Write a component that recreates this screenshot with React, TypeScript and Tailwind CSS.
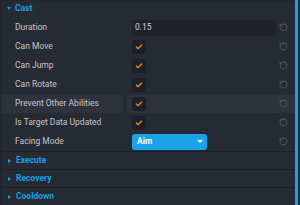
import { RotateCcw, Check } from "lucide-react";

type Row = {
  label: string;
  kind: "input" | "check" | "select";
  value?: string;
  active?: boolean;
};

const rows: Row[] = [
  { label: "Duration", kind: "input", value: "0.15" },
  { label: "Can Move", kind: "check" },
  { label: "Can Jump", kind: "check" },
  { label: "Can Rotate", kind: "check" },
  { label: "Prevent Other Abilities", kind: "check", active: true },
  { label: "Is Target Data Updated", kind: "check" },
  { label: "Facing Mode", kind: "select", value: "Aim" },
];

const sections = ["Execute", "Recovery", "Cooldown"];

function ResetIcon() {
  return (
    <RotateCcw
      className="h-[9px] w-[9px] text-[#4d525d]"
      strokeWidth={2.8}
    />
  );
}

function PropertyRow({ row }: { row: Row }) {
  const bg = row.active ? "bg-[#2e323c]" : "";
  return (
    <div className="flex h-[19px] items-center">
      <div
        className={`flex h-[18px] w-[121px] items-center whitespace-nowrap pl-[13px] text-[8.5px] text-[#c3c6cc] ${bg}`}
      >
        {row.label}
      </div>
      <div className={`ml-[4px] flex h-[18px] flex-1 items-center pl-[5px] ${bg}`}>
        <div className="flex w-[144px] items-center">
          {row.kind === "input" && (
            <div className="flex h-[16px] w-[144px] items-center rounded-[3px] bg-[#1e2128] pl-[3px] text-[8.5px] text-[#d2d4d8]">
              {row.value}
            </div>
          )}
          {row.kind === "check" && (
            <div className="flex h-[14px] w-[14px] items-center justify-center rounded-[2px] bg-[#1d2027]">
              <Check className="h-[8px] w-[8px] text-[#e08b1f]" strokeWidth={4} />
            </div>
          )}
          {row.kind === "select" && (
            <div className="flex h-[16px] w-[75px] items-center justify-between rounded-[3px] bg-[#1ba3ea] pl-[5px] pr-[4px] text-[8.5px] font-bold text-white">
              <span>{row.value}</span>
              <span className="h-0 w-0 border-x-[3px] border-t-[3px] border-x-transparent border-t-white" />
            </div>
          )}
        </div>
        <div className="ml-auto mr-[7px] flex items-center">
          <ResetIcon />
        </div>
      </div>
    </div>
  );
}

function SectionHeader({ title }: { title: string }) {
  return (
    <div className="flex h-[18px] items-center border-t border-[#1c1f25] pl-[6px]">
      <span className="h-0 w-0 border-y-[2.5px] border-l-[3px] border-y-transparent border-l-[#1a9ee6]" />
      <span className="ml-[5px] text-[8.5px] font-bold text-[#1a9ee6]">{title}</span>
    </div>
  );
}

export default function App() {
  return (
    <div
      className="flex h-[205px] w-[300px] overflow-hidden bg-[#262a33]"
      style={{ fontFamily: "Roboto, 'Liberation Sans', sans-serif" }}
    >
      <div className="flex flex-1 flex-col border-l-2 border-[#23262e]">
        <div className="flex h-[16px] items-center border-t border-[#22252c] pl-[5px]">
          <span className="h-0 w-0 border-x-[2.5px] border-t-[3px] border-x-transparent border-t-[#1a9ee6]" />
          <span className="ml-[4px] text-[8.5px] font-bold text-[#1a9ee6]">Cast</span>
        </div>
        <div className="flex flex-col pt-[2px]">
          {rows.map((r) => (
            <PropertyRow key={r.label} row={r} />
          ))}
        </div>
        {sections.map((s) => (
          <SectionHeader key={s} title={s} />
        ))}
      </div>
      <div className="w-[3px] bg-[#1aa0e6]" />
      <div className="w-[2px] bg-[#22252d]" />
    </div>
  );
}
